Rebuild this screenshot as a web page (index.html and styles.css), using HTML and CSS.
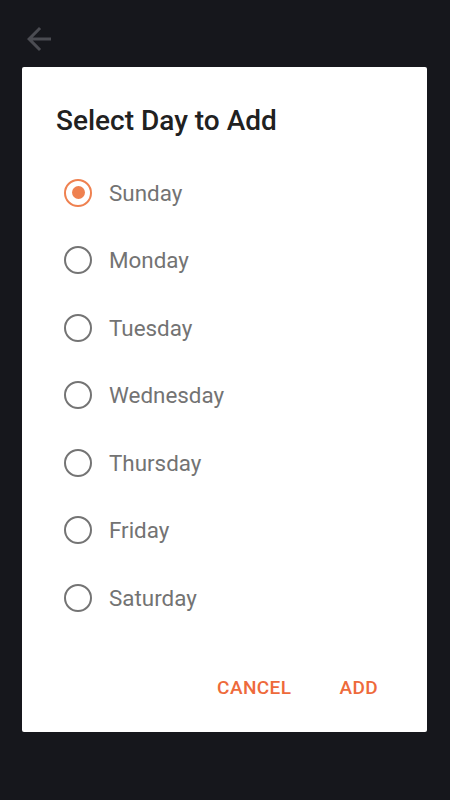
FILE: index.html
```html
<!DOCTYPE html>
<html lang="en">
<head>
    <meta charset="UTF-8">
    <meta name="viewport" content="width=device-width, initial-scale=1.0">
    <title>Select Day</title>
    <link rel="stylesheet" href="styles.css">
</head>
<body>
    <div class="screen">
        <div class="toolbar">
            <svg class="back" viewBox="0 0 24 24" width="36" height="36">
                <path d="M20 11H7.830l5.59-5.59L12 4l-8 8 8 8 1.41-1.41L7.83 13H20v-2z" fill="#4b4c52"/>
            </svg>
        </div>
        <div class="dialog">
            <h1 class="title">Select Day to Add</h1>
            <ul class="days">
                <li class="day checked"><span class="radio"></span><span class="label">Sunday</span></li>
                <li class="day"><span class="radio"></span><span class="label">Monday</span></li>
                <li class="day"><span class="radio"></span><span class="label">Tuesday</span></li>
                <li class="day"><span class="radio"></span><span class="label">Wednesday</span></li>
                <li class="day"><span class="radio"></span><span class="label">Thursday</span></li>
                <li class="day"><span class="radio"></span><span class="label">Friday</span></li>
                <li class="day"><span class="radio"></span><span class="label">Saturday</span></li>
            </ul>
            <div class="actions">
                <button class="action">CANCEL</button>
                <button class="action">ADD</button>
            </div>
        </div>
    </div>
</body>
</html>
```

FILE: styles.css
```css
body {
    margin: 0;
    padding: 0;
    background-color: #16171c;
    font-family: Roboto, "Noto Sans", sans-serif;
}
.screen {
    width: 450px;
    height: 800px;
    display: flex;
    flex-direction: column;
}
.toolbar {
    height: 67px;
    padding-left: 21px;
    padding-top: 21px;
    box-sizing: border-box;
}
.back {
    display: block;
}
.dialog {
    margin: 0 23px 0 22px;
    height: 665px;
    background-color: #fff;
    border-radius: 2px;
    display: flex;
    flex-direction: column;
    box-sizing: border-box;
    padding-top: 37px;
}
.title {
    margin: 0;
    padding-left: 34px;
    font-size: 28px;
    line-height: 33px;
    font-weight: 500;
    color: #212121;
}
.days {
    list-style: none;
    margin: 22px 0 0 0;
    padding: 0;
}
.day {
    height: 67.5px;
    display: flex;
    align-items: center;
    padding-left: 42px;
}
.radio {
    width: 28px;
    height: 28px;
    box-sizing: border-box;
    border: 2.5px solid #747474;
    border-radius: 50%;
    display: flex;
    align-items: center;
    justify-content: center;
}
.day.checked .radio {
    border-color: #ef8150;
}
.day.checked .radio::after {
    content: "";
    width: 13px;
    height: 13px;
    border-radius: 50%;
    background-color: #ef8150;
}
.label {
    margin-left: 17px;
    font-size: 22.4px;
    color: #737373;
}
.actions {
    display: flex;
    justify-content: flex-end;
    align-items: center;
    height: 50px;
    margin-top: 31px;
    padding-right: 37px;
    gap: 24px;
}
.action {
    border: none;
    background: none;
    padding: 0 12px;
    height: 50px;
    font-family: Roboto, "Noto Sans", sans-serif;
    font-size: 19px;
    font-weight: 500;
    letter-spacing: 0.4px;
    color: #ee6a3b;
}
```
